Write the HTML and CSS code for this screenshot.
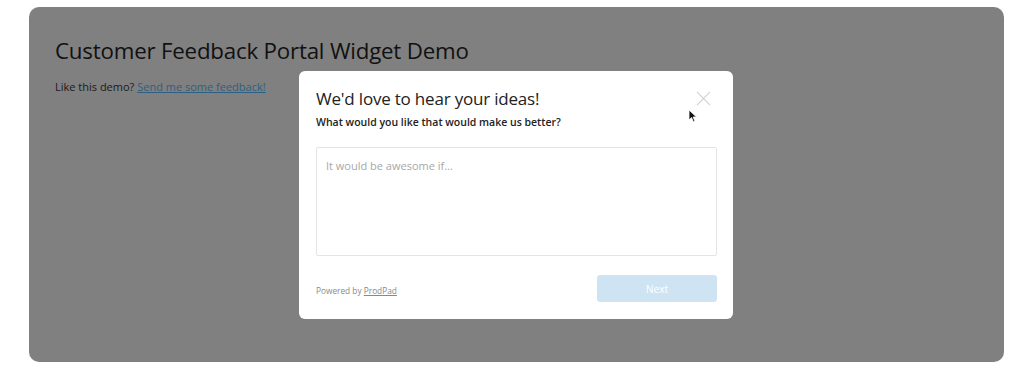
FILE: index.html
```html
<!DOCTYPE html>
<html>
<head>
<meta charset="utf-8">
<link rel="stylesheet" href="styles.css">
</head>
<body>
<div class="panel">
  <h1 class="title">Customer Feedback Portal Widget Demo</h1>
  <p class="intro">Like this demo? <a class="link" href="#">Send me some feedback!</a></p>
  <div class="modal">
    <div class="modal-head">
      <div>
        <h2 class="modal-title">We'd love to hear your ideas!</h2>
        <p class="modal-sub">What would you like that would make us better?</p>
      </div>
      <svg class="close" width="15" height="15" viewBox="0 0 16 16"><path d="M1 1L15 15M15 1L1 15" stroke="#d0d0d0" stroke-width="1.2" fill="none"/></svg>
    </div>
    <div class="textarea">It would be awesome if...</div>
    <div class="modal-foot">
      <span class="powered">Powered by <a class="pp" href="#">ProdPad</a></span>
      <span class="btn">Next</span>
    </div>
    <svg class="cursor" width="10" height="14" viewBox="0 0 10 14"><path d="M1 1L1 11L3.5 8.6L5.5 13L7 12.3L5.1 8L8.5 8Z" fill="#111" stroke="#fff" stroke-width="0.8"/></svg>
  </div>
</div>
</body>
</html>
```
FILE: styles.css
```css
html, body { margin: 0; padding: 0; background: #fff; }
body { width: 1024px; height: 374px; overflow: hidden; font-family: "Open Sans", sans-serif; }
.panel {
  position: relative;
  margin: 7px 20px 0 29px;
  height: 355px;
  background: #808080;
  border-radius: 10px;
  padding: 30px 26px 0 26px;
  box-sizing: border-box;
}
.title { margin: 0; font-size: 22.3px; font-weight: 400; color: #111; line-height: 28px; letter-spacing: -0.2px; }
.intro { margin: 14px 0 0 0; font-size: 11px; color: #1a1a1a; line-height: 16px; }
.link { color: #2f5f80; text-decoration: underline; }
.modal {
  position: absolute;
  left: 270px; top: 64px;
  width: 434px; height: 248px;
  box-sizing: border-box;
  background: #fff;
  border-radius: 6px;
  padding: 16px 16px 0 17px;
  display: flex; flex-direction: column;
}
.modal-head { display: flex; justify-content: space-between; align-items: flex-start; }
.modal-title { margin: 0; font-size: 17px; font-weight: 400; color: #222; line-height: 24px; letter-spacing: -0.2px; }
.modal-sub { margin: 4px 0 0 0; font-size: 10.5px; font-weight: 600; color: #222; line-height: 14px; }
.close { margin: 4px 6px 0 0; }
.textarea {
  margin-top: 18px;
  height: 109px;
  border: 1px solid #e4e4e4;
  border-radius: 2px;
  box-sizing: border-box;
  padding: 10px 9px;
  font-size: 11px; color: #a8a8a8; line-height: 16px;
}
.modal-foot { display: flex; justify-content: space-between; align-items: center; margin-top: 19px; }
.powered { font-size: 8.3px; color: #888; padding-top: 3px; }
.pp { color: #888; text-decoration: underline; }
.btn {
  width: 120px; height: 27px;
  background: #cfe4f2;
  border-radius: 3px;
  color: #fff; font-size: 10px;
  display: flex; align-items: center; justify-content: center;
}
.cursor { position: absolute; left: 389px; top: 38px; }
```
